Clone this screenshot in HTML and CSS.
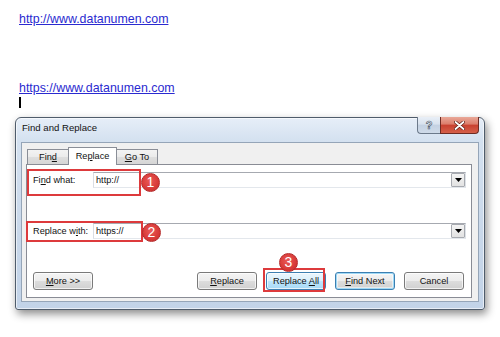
FILE: index.html
```html
<!DOCTYPE html>
<html>
<head>
<meta charset="utf-8">
<link rel="stylesheet" href="styles.css">
</head>
<body>
<div class="doc">
  <a class="link link1" href="#">http://www.datanumen.com</a>
  <a class="link link2" href="#">https://www.datanumen.com</a>
  <div class="cursor"></div>
</div>
<div class="dialog">
  <div class="titlebar">
    <div class="title">Find and Replace</div>
    <div class="caption">
      <div class="cap help">?</div>
      <div class="cap close">
        <svg width="11" height="9" viewBox="0 0 11 9"><path d="M1.5 1 L9.5 8 M9.5 1 L1.5 8" stroke="#5a1a12" stroke-width="3.2" stroke-linecap="round"/><path d="M1.5 1 L9.5 8 M9.5 1 L1.5 8" stroke="#fff" stroke-width="1.8" stroke-linecap="round"/></svg>
      </div>
    </div>
  </div>
  <div class="client">
    <div class="tabs">
      <div class="tab t-find"><span>Fin<u>d</u></span></div>
      <div class="tab t-replace"><span>Re<u>p</u>lace</span></div>
      <div class="tab t-goto"><span><u>G</u>o To</span></div>
    </div>
    <div class="panel">
      <div class="row row1">
        <div class="label">Fi<u>n</u>d what:</div>
        <div class="combo"><span class="val">http://</span><span class="drop"><svg width="7" height="4" viewBox="0 0 7 4"><path d="M0 0 H7 L3.5 4 Z" fill="#000"/></svg></span></div>
      </div>
      <div class="row row2">
        <div class="label">Replace w<u>i</u>th:</div>
        <div class="combo"><span class="val">https://</span><span class="drop"><svg width="7" height="4" viewBox="0 0 7 4"><path d="M0 0 H7 L3.5 4 Z" fill="#000"/></svg></span></div>
      </div>
      <div class="buttons">
        <div class="btn"><span><u>M</u>ore &gt;&gt;</span></div>
        <div class="btn push"><span><u>R</u>eplace</span></div>
        <div class="btn hot"><span>Replace <u>A</u>ll</span></div>
        <div class="btn def"><span><u>F</u>ind Next</span></div>
        <div class="btn"><span>Cancel</span></div>
      </div>
      <div class="mark m1"></div>
      <div class="mark m2"></div>
      <div class="mark m3"></div>
      <div class="badge b1">1</div>
      <div class="badge b2">2</div>
      <div class="badge b3">3</div>
    </div>
  </div>
</div>
</body>
</html>
```
FILE: styles.css
```css
* { box-sizing: border-box; }
html, body { margin: 0; padding: 0; background: #fff; }
body { width: 500px; height: 337px; overflow: hidden; font-family: "Liberation Sans", Arial, sans-serif; }

.doc { height: 117px; padding: 12px 0 0 19px; }
.link { display: block; width: max-content; color: #2a2ad0; font-size: 12.4px; line-height: 14px; text-decoration: underline; text-underline-offset: 1px; }
.link2 { margin-top: 55px; }
.cursor { width: 1.5px; height: 11px; background: #000; margin-top: 2px; }

.dialog {
  margin-left: 15px; width: 470px; height: 193px;
  border: 1px solid #4f5c6b; border-radius: 6px 6px 3px 3px;
  background: linear-gradient(180deg, #e6eef8 0%, #d4e1f0 12%, #c9d8ea 60%, #c2d3e8 100%);
  box-shadow: 2px 4px 9px rgba(0,0,0,0.45), inset 0 0 0 1px rgba(255,255,255,0.6);
  font-size: 9.2px; color: #000;
}
.titlebar { height: 24px; display: flex; align-items: flex-start; }
.title { padding-left: 6px; line-height: 20px; font-size: 9.6px; color: #111; }
.caption { margin-left: auto; margin-right: 5px; display: flex; margin-top: -1px; }
.cap { height: 17px; display: flex; align-items: center; justify-content: center; }
.help {
  width: 23px; border: 1px solid #6c7a8b; border-top: none; border-right: none; border-radius: 0 0 0 4px;
  background: linear-gradient(180deg, #e9eff7 0%, #d8e2ee 45%, #c3d1e2 50%, #cfdbe9 100%);
  font-size: 11px; font-weight: bold; color: #e8eef5; -webkit-text-stroke: 0.6px #4a5666; line-height: 16px;
}
.close {
  width: 39px; border: 1px solid #6e2c24; border-top: none; border-radius: 0 0 4px 0;
  background: linear-gradient(180deg, #e9a898 0%, #dc7d6b 45%, #c8402f 50%, #d5604a 100%);
}

.client {
  margin: 0 5px 0 5px; height: 160px;
  border: 1px solid #95a5b8; background: #f0f0f0;
  padding: 4px 6px 0 4px;
}
.tabs { height: 17px; display: flex; align-items: flex-end; padding-left: 1px; position: relative; z-index: 2; }
.tab {
  height: 15px; border: 1px solid #8a8e97; border-bottom: none;
  background: linear-gradient(180deg, #f3f3f3 0%, #ebebeb 50%, #dedede 51%, #d6d6d6 100%);
  display: flex; align-items: center; justify-content: center; font-size: 9.2px; color: #111;
}
.t-find { width: 41px; border-right: none; }
.t-replace { width: 49px; height: 18px; margin-bottom: -1px; background: #fff; padding-bottom: 2px; }
.t-goto { width: 41px; border-left: none; }

.panel {
  position: relative; height: 134px; background: #fff; border: 1px solid #898c95;
  padding: 0 5px 0 6px;
}
.row { display: flex; align-items: center; height: 16px; }
.row1 { margin-top: 7px; }
.row2 { margin-top: 35px; }
.label { width: 60px; font-size: 9.2px; color: #111; }
.combo {
  flex: 1; height: 16px; border: 1px solid #abadb3; border-color: #a6a9b0 #dde1e6 #e3e7ec #d9dde3;
  display: flex; align-items: center; justify-content: space-between; padding-left: 2px; background: #fff;
}
.val { font-size: 9.2px; color: #111; }
.drop {
  width: 14px; height: 14px; border: 1px solid #a7aab0; border-radius: 1px;
  background: linear-gradient(180deg, #f4f4f4, #e2e2e2);
  display: flex; align-items: center; justify-content: center;
}
.buttons { display: flex; margin-top: 33px; padding-right: 2px; gap: 9px; }
.btn {
  width: 60px; height: 18px; border: 1px solid #7a7a7a; border-radius: 3px;
  background: linear-gradient(180deg, #f4f4f4 0%, #ececec 50%, #dddddd 51%, #d0d0d0 100%);
  display: flex; align-items: center; justify-content: center; font-size: 9.2px; color: #111;
  box-shadow: inset 0 0 0 1px rgba(255,255,255,0.7);
}
.push { margin-left: auto; }
.hot { border-color: #3c7fb1; background: linear-gradient(180deg, #eaf6fd 0%, #d9f0fc 50%, #bee6fd 51%, #a7d9f5 100%); }
.def { border-color: #3c7fb1; box-shadow: inset 0 0 0 1px #9fd9f6, inset 0 0 0 2px rgba(255,255,255,0.5); }

.mark { position: absolute; border: 2px solid #dd3a3c; }
.m1 { left: 0; top: 4px; width: 114px; height: 27px; }
.m2 { left: -1px; top: 56px; width: 117px; height: 21px; }
.m3 { left: 236px; top: 103px; width: 62px; height: 24px; }

.badge {
  position: absolute; width: 19px; height: 19px; border-radius: 50%;
  background: radial-gradient(circle at 45% 40%, #ea5a57 0%, #d83a38 60%, #c22b2b 100%);
  border: 1px solid #b52a2a;
  color: #fff; font-family: "Liberation Sans", Arial, sans-serif; font-size: 14px; line-height: 17px; text-align: center;
}
.b1 { left: 114px; top: 8px; }
.b2 { left: 115px; top: 58px; }
.b3 { left: 252px; top: 88px; }
```
